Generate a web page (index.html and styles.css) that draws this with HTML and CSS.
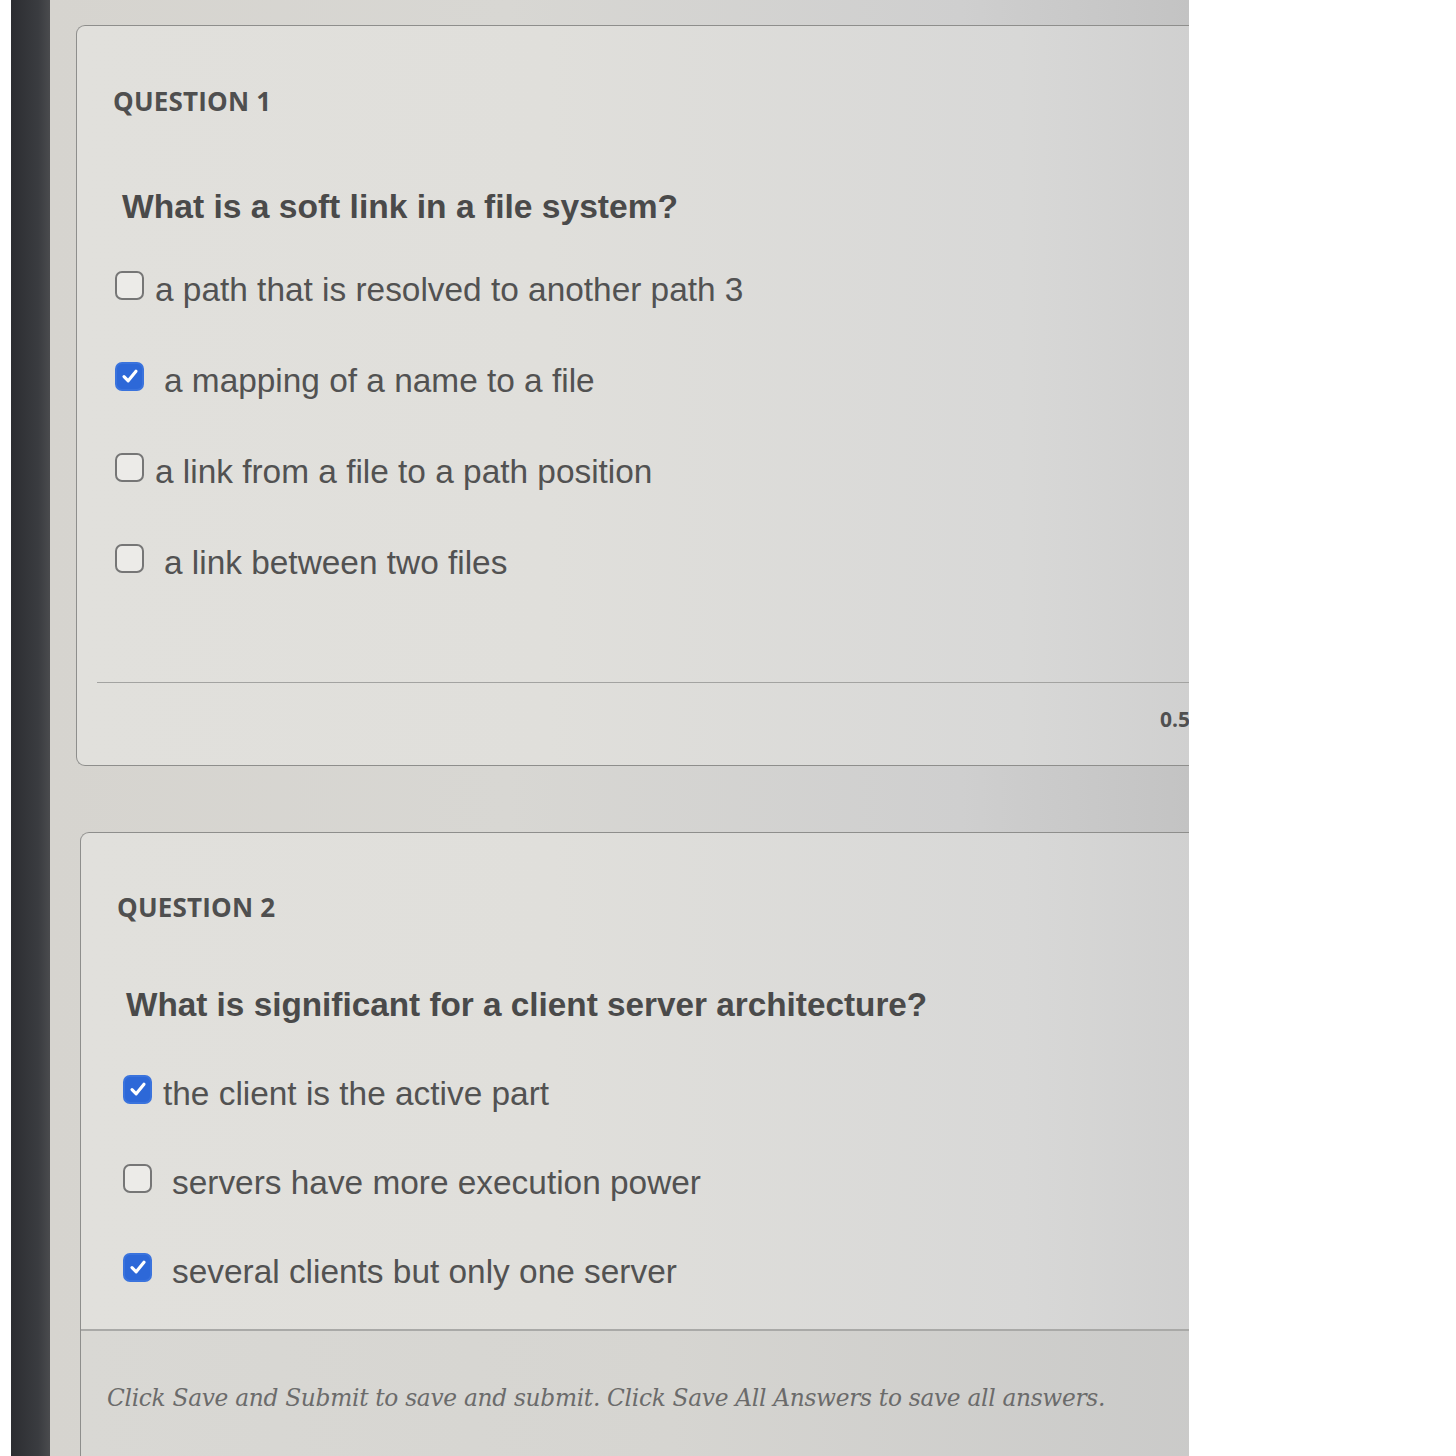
FILE: index.html
```html
<!DOCTYPE html>
<html>
<head>
<meta charset="utf-8">
<link rel="stylesheet" href="styles.css">
</head>
<body>
<div class="frame">
  <div class="bezel"></div>
  <div class="screen">
    <section class="card card-one">
      <h2 class="q-label">QUESTION 1</h2>
      <p class="q-text">What is a soft link in a file system?</p>
      <ul class="options">
        <li class="option"><span class="box"></span><span>a path that is resolved to another path 3</span></li>
        <li class="option"><span class="box checked"><svg viewBox="0 0 20 20"><path d="M5 10.5 L8.5 14 L15 6" fill="none" stroke="#fff" stroke-width="2.6" stroke-linecap="round" stroke-linejoin="round"/></svg></span><span class="wide">a mapping of a name to a file</span></li>
        <li class="option"><span class="box"></span><span>a link from a file to a path position</span></li>
        <li class="option"><span class="box"></span><span class="wide">a link between two files</span></li>
      </ul>
      <div class="divider"></div>
      <div class="score">0.5 points</div>
    </section>
    <section class="card card-two">
      <h2 class="q-label">QUESTION 2</h2>
      <p class="q-text">What is significant for a client server architecture?</p>
      <ul class="options">
        <li class="option"><span class="box checked"><svg viewBox="0 0 20 20"><path d="M5 10.5 L8.5 14 L15 6" fill="none" stroke="#fff" stroke-width="2.6" stroke-linecap="round" stroke-linejoin="round"/></svg></span><span>the client is the active part</span></li>
        <li class="option"><span class="box"></span><span class="wide">servers have more execution power</span></li>
        <li class="option"><span class="box checked"><svg viewBox="0 0 20 20"><path d="M5 10.5 L8.5 14 L15 6" fill="none" stroke="#fff" stroke-width="2.6" stroke-linecap="round" stroke-linejoin="round"/></svg></span><span class="wide">several clients but only one server</span></li>
      </ul>
      <div class="footer">
        <p class="note">Click Save and Submit to save and submit. Click Save All Answers to save all answers.</p>
      </div>
    </section>
  </div>
</div>
</body>
</html>
```

FILE: styles.css
```css
html, body {
  margin: 0;
  padding: 0;
  background: #ffffff;
}
.frame {
  display: flex;
  height: 1456px;
  padding-left: 11px;
  box-sizing: border-box;
}
.bezel {
  width: 39px;
  flex: none;
  background: linear-gradient(90deg, #2c2d31 0%, #3a3c40 70%, #4a4b4e 100%);
}
.screen {
  width: 1139px;
  flex: none;
  overflow: hidden;
  background: linear-gradient(90deg, #d6d4cf 0%, #d8d7d3 40%, #cfcfcf 80%, #c3c3c3 100%);
  padding-top: 25px;
  box-sizing: border-box;
}
.card {
  width: 1180px;
  box-sizing: border-box;
  border: 1.5px solid #8e8e8c;
  border-right: none;
  border-radius: 9px 0 0 9px;
  background: linear-gradient(90deg, #e1e0dc 0%, #e0dfdb 40%, #d8d8d7 80%, #cdcdcd 100%);
  font-family: "Liberation Sans", Arial, sans-serif;
}
.card-one {
  margin-left: 26px;
  height: 741px;
  padding-top: 56px;
}
.card-two {
  margin-left: 30px;
  margin-top: 66px;
  height: 700px;
  padding-top: 55px;
  border-bottom: none;
  border-radius: 9px 0 0 0;
}
.q-label {
  margin: 0 0 0 36px;
  font-family: "Open Sans", "Noto Sans", sans-serif;
  font-weight: 700;
  font-size: 26px;
  line-height: 38px;
  color: #4f4f4f;
  letter-spacing: 0.2px;
}
.q-text {
  margin: 67px 0 0 45px;
  font-weight: 700;
  font-size: 33.6px;
  line-height: 40px;
  color: #4a4a4a;
}
.options {
  list-style: none;
  margin: 43px 0 0 38px;
  padding: 0;
  display: flex;
  flex-direction: column;
  gap: 51px;
}
.option {
  display: flex;
  align-items: center;
  gap: 11px;
  font-size: 33.4px;
  line-height: 40px;
  color: #525252;
}
.option .wide {
  margin-left: 9px;
}
.box {
  width: 29px;
  height: 29px;
  flex: none;
  box-sizing: border-box;
  border: 2px solid #767676;
  border-radius: 7px;
  background: #ecebe8;
  display: flex;
  align-items: center;
  justify-content: center;
  margin-top: -10px;
}
.box.checked {
  background: #2d68d8;
  border-color: #3a73dd;
}
.box svg {
  width: 24px;
  height: 24px;
}
.divider {
  margin: 99px 0 0 20px;
  border-top: 1.5px solid #a3a3a1;
}
.score {
  margin: 24px 0 0 1083px;
  font-family: "Open Sans", "Noto Sans", sans-serif;
  font-weight: 700;
  font-size: 21px;
  line-height: 24px;
  color: #505050;
  white-space: nowrap;
}
.card-two .q-text {
  margin-top: 59px;
  font-size: 33.3px;
}
.card-two .options {
  margin-top: 49px;
  gap: 49px;
  margin-left: 42px;
}
.footer {
  margin-top: 37px;
  border-top: 2px solid #a9a9a7;
  background: linear-gradient(90deg, #d9d8d4 0%, #d6d5d1 50%, #c9c9c8 100%);
  height: 200px;
  padding-top: 52px;
  box-sizing: border-box;
}
.note {
  margin: 0 0 0 26px;
  font-family: "DejaVu Serif", "Liberation Serif", serif;
  font-style: italic;
  font-size: 23.3px;
  line-height: 30px;
  color: #6b6b6b;
  letter-spacing: -0.3px;
}
```
